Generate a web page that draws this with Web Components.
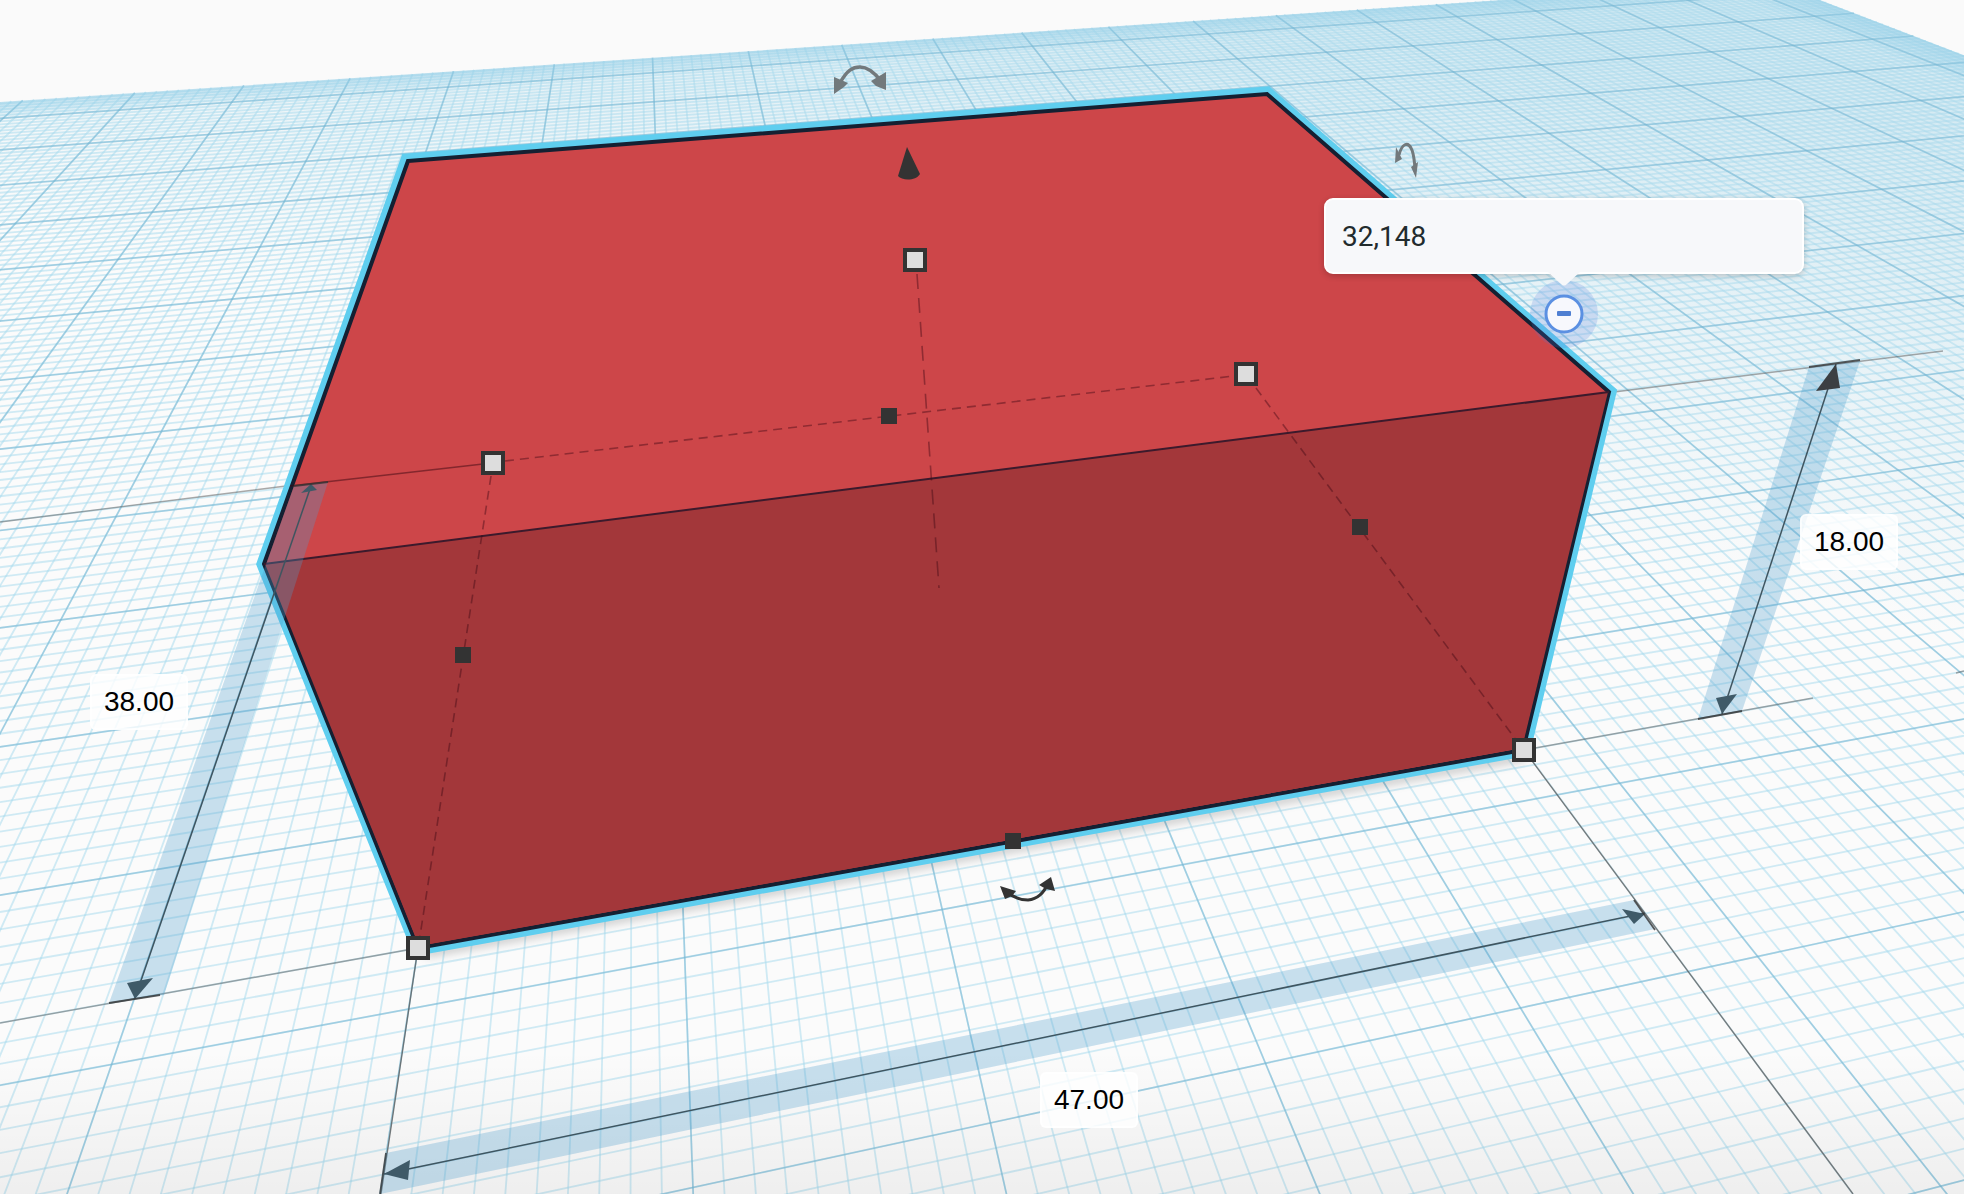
<!DOCTYPE html>
<html lang="en">
<head>
<meta charset="utf-8">
<title>Workplane</title>
<style>
    body {
        margin: 0;
        background: #fafafa;
        overflow: hidden;
    }
</style>
</head>
<body>
<scene-view>
    <work-plane></work-plane>
    <solid-box></solid-box>
    <rotate-handles></rotate-handles>

    <size-handle x="915" y="260" label="Height"></size-handle>
    <size-handle x="493" y="463" label="Back left corner"></size-handle>
    <size-handle x="1246" y="374" label="Back right corner"></size-handle>
    <size-handle x="418" y="948" label="Front left corner"></size-handle>
    <size-handle x="1524" y="750" label="Front right corner"></size-handle>
    <size-handle small x="889" y="416" label="Back edge"></size-handle>
    <size-handle small x="463" y="655" label="Left edge"></size-handle>
    <size-handle small x="1360" y="527" label="Right edge"></size-handle>
    <size-handle small x="1013" y="841" label="Front edge"></size-handle>

    <dimension-field x="139" y="702" value="38.00" label="Depth"></dimension-field>
    <dimension-field x="1849" y="542" value="18.00" label="Length"></dimension-field>
    <dimension-field x="1089" y="1100" value="47.00" label="Width"></dimension-field>

    <note-pin x="1564" y="314">32,148</note-pin>
</scene-view>

<script>
const SCENE_W = 1964;
const SCENE_H = 1194;

// puts an element on the free canvas, x and y are its centre in scene units
function placeOnScene(el) {
    el.style.left = (el.getAttribute('x') / SCENE_W * 100) + '%';
    el.style.top = (el.getAttribute('y') / SCENE_H * 100) + '%';
}

class SceneView extends HTMLElement {
    constructor() {
        super();
        this.attachShadow({mode: 'open'});
    }

    connectedCallback() {
        this.shadowRoot.innerHTML = `
            <style>
                :host {
                    display: block;
                    position: relative;
                    width: 100%;
                    aspect-ratio: 1964 / 1194;
                    overflow: hidden;
                    font-family: "Liberation Sans", Arial, sans-serif;
                }
            </style>
            <slot></slot>
        `;
    }
}

class WorkPlane extends HTMLElement {
    constructor() {
        super();
        this.attachShadow({mode: 'open'});
        this.left = -60;
        this.right = 145.2;
        this.near = -32;
        this.far = 122.6;
    }

    connectedCallback() {
        this.shadowRoot.innerHTML = `
            <style>
                :host {
                    display: block;
                    position: absolute;
                    inset: 0;
                }
                svg {
                    display: block;
                    width: 100%;
                    height: 100%;
                }
            </style>
            <svg viewBox="0 0 1964 1194" aria-hidden="true">
                <defs>
                    <linearGradient id="far" gradientUnits="userSpaceOnUse" x1="1300" y1="0" x2="1200" y2="480">
                        <stop offset="0" stop-color="#b0daeb" stop-opacity=".5"/>
                        <stop offset="1" stop-color="#b0daeb" stop-opacity="0"/>
                    </linearGradient>
                    <linearGradient id="rim" gradientUnits="userSpaceOnUse" x1="652" y1="57" x2="653.3" y2="76">
                        <stop offset="0" stop-color="#8fcce6" stop-opacity=".5"/>
                        <stop offset="1" stop-color="#8fcce6" stop-opacity="0"/>
                    </linearGradient>
                    <linearGradient id="side" gradientUnits="userSpaceOnUse" x1="1892" y1="28" x2="1882" y2="54">
                        <stop offset="0" stop-color="#8fcce6" stop-opacity=".5"/>
                        <stop offset="1" stop-color="#8fcce6" stop-opacity="0"/>
                    </linearGradient>
                    <linearGradient id="floor" x1="0" y1="0" x2="0" y2="1">
                        <stop offset=".88" stop-color="#000" stop-opacity="0"/>
                        <stop offset="1" stop-color="#000" stop-opacity=".05"/>
                    </linearGradient>
                </defs>
                <polygon points="${this.outline()}" fill="#fbfbfb"/>
                <path d="${this.columns(1, 0)}" stroke="#a4d9ee" stroke-opacity=".5" stroke-width="1.8" fill="none"/>
                <path d="${this.rows(1, -3)}" stroke="#a4d9ee" stroke-opacity=".5" stroke-width="1.8" fill="none"/>
                <polygon points="${this.outline()}" fill="url(#far)"/>
                <path d="${this.columns(10, 0)}" stroke="#6fb2d0" stroke-opacity=".5" stroke-width="1.6" fill="none"/>
                <path d="${this.rows(10, -3)}" stroke="#6fb2d0" stroke-opacity=".5" stroke-width="1.6" fill="none"/>
                <polygon points="${this.outline()}" fill="url(#rim)"/>
                <polygon points="${this.outline()}" fill="url(#side)"/>
                <rect width="1964" height="1194" fill="url(#floor)"/>
            </svg>
        `;
    }

    // plane millimetres to scene units, origin at the front left corner of the box
    project(u, v) {
        const w = 1 + 0.003479 * u + 0.013913 * v;
        const x = (28.845 * u + 8.824 * v + 418) / w;
        const y = (-1.604 * u - 6.311 * v + 948) / w;
        return x.toFixed(2) + ' ' + y.toFixed(2);
    }

    outline() {
        return [
            this.project(this.left, this.near),
            this.project(this.right, this.near),
            this.project(this.right, this.far),
            this.project(this.left, this.far)
        ].join(' ');
    }

    columns(step, offset) {
        let d = '';
        const start = Math.ceil((this.left - offset) / step) * step + offset;
        for (let u = start; u <= this.right; u += step) {
            d += 'M' + this.project(u, this.near) + 'L' + this.project(u, this.far);
        }
        return d;
    }

    rows(step, offset) {
        let d = '';
        const start = Math.ceil((this.near - offset) / step) * step + offset;
        for (let v = start; v <= this.far; v += step) {
            d += 'M' + this.project(this.left, v) + 'L' + this.project(this.right, v);
        }
        return d;
    }
}

class SolidBox extends HTMLElement {
    constructor() {
        super();
        this.attachShadow({mode: 'open'});
    }

    connectedCallback() {
        this.shadowRoot.innerHTML = `
            <style>
                :host {
                    display: block;
                    position: absolute;
                    inset: 0;
                }
                svg {
                    display: block;
                    width: 100%;
                    height: 100%;
                }
                .guide { stroke: #555; stroke-opacity: .5; stroke-width: 1.4; }
                .tick { stroke: #333; stroke-opacity: .8; stroke-width: 1.8; }
                .arrow { stroke: #3f5560; stroke-width: 1.5; }
                .head { fill: #3f5a68; }
                .band { fill: rgba(80, 160, 205, .3); }
                .dash { stroke: #3c0812; stroke-opacity: .42; stroke-width: 1.6; stroke-dasharray: 9 6; }
            </style>
            <svg viewBox="0 0 1964 1194" fill="none" aria-hidden="true">
                <defs>
                    <filter id="soft" x="-10%" y="-10%" width="120%" height="120%">
                        <feGaussianBlur stdDeviation="5"/>
                    </filter>
                </defs>

                <!-- guide lines on the plane -->
                <path class="guide" d="M0 1023L418 948M1524 750L1813 698M0 522L294 485M1614 392L1943 351M1956 673L1964 671"/>
                <path class="guide" d="M418 948L381 1194M1524 750L1853 1194" style="stroke-opacity:.75"/>

                <!-- shadow, selection outline, faces -->
                <path d="M425 953L1526 756" stroke="#000" stroke-opacity=".22" stroke-width="8" filter="url(#soft)"/>
                <polygon points="407,160 1267,93 1610,392 1524,750 418,949 263,564" stroke="#5fceef" stroke-width="13" stroke-linejoin="miter"/>
                <polygon points="408,161 1267,94 1609,392 1523,750 418,948 264,564" fill="#cd4649" stroke="#152032" stroke-width="4"/>
                <polygon points="265,564 1608,392 1522,748 419,946" fill="#a3373a"/>
                <path d="M264 564L1609 392" stroke="#3c1a2c" stroke-width="2"/>

                <!-- hidden edges -->
                <path d="M290 486L483 464" stroke="#3c0812" stroke-opacity=".5" stroke-width="1.6"/>
                <path class="dash" d="M505 461L1234 376M491 476L420 936M1256 388L1516 740"/>
                <path d="M917 274L939 588" stroke="#3c0812" stroke-opacity=".42" stroke-width="1.6" stroke-dasharray="15 9"/>

                <!-- depth -->
                <polygon class="band" points="109,1003 164,995 328,482 294,486"/>
                <path class="arrow" d="M135 998L311 486"/>
                <polygon class="head" points="127,983 153,978 135,999"/>
                <polygon class="head" points="301,493 317,490 311,484"/>
                <path class="tick" d="M109 1003L160 995M294 486L328 482"/>

                <!-- width -->
                <polygon class="band" points="386,1153 1634,900 1655,929 380,1194"/>
                <path class="arrow" d="M384 1174L1645 913"/>
                <polygon class="head" points="384,1174 410,1160 408,1180"/>
                <polygon class="head" points="1645,914 1622,909 1634,924"/>
                <path class="tick" d="M386 1153L380 1194M1634 900L1655 930"/>

                <!-- length -->
                <polygon class="band" points="1809,367 1860,361 1742,711 1698,719"/>
                <path class="arrow" d="M1836 364L1722 714"/>
                <polygon points="1836,364 1816,391 1840,388" fill="#3c3f42"/>
                <polygon class="head" points="1716,698 1737,694 1722,714"/>
                <path class="tick" d="M1809 367L1860 360M1698 719L1742 711"/>
            </svg>
        `;
    }
}

class RotateHandles extends HTMLElement {
    constructor() {
        super();
        this.attachShadow({mode: 'open'});
    }

    connectedCallback() {
        this.shadowRoot.innerHTML = `
            <style>
                :host {
                    display: block;
                    position: absolute;
                    inset: 0;
                }
                svg {
                    display: block;
                    width: 100%;
                    height: 100%;
                }
            </style>
            <svg viewBox="0 0 1964 1194" fill="none" aria-hidden="true">
                <g stroke="#72797c" stroke-width="3.5">
                    <path d="M840 83C847 70 853 67 860 67C868 67 874 72 881 81"/>
                    <path d="M834 77L848 83L844 87L834 94Z M886 72L871 81L876 86L886 90Z" fill="#72797c" stroke="none"/>
                </g>
                <g stroke="#72797c" stroke-width="3">
                    <path d="M1399 155C1402 143 1408 142 1411 148C1414 153 1414 159 1415 168"/>
                    <path d="M1396 147L1402 159L1395 163Z M1411 167L1418 162L1416 178Z" fill="#72797c" stroke="none"/>
                </g>
                <g stroke="#333" stroke-width="3.2">
                    <path d="M1007 892C1014 898 1021 900 1028 900C1038 899 1044 893 1048 883"/>
                    <path d="M1000 886L1016 891L1012 896L1005 899Z M1051 877L1039 885L1046 889L1055 891Z" fill="#333" stroke="none"/>
                </g>
                <path d="M907 147L898 176C902 181 916 181 920 174Z" fill="#333"/>
            </svg>
        `;
    }
}

class SizeHandle extends HTMLElement {
    constructor() {
        super();
        this.attachShadow({mode: 'open'});
    }

    connectedCallback() {
        this.shadowRoot.innerHTML = `
            <style>
                :host {
                    display: block;
                    position: absolute;
                    transform: translate(-50%, -50%);
                }
                button {
                    display: block;
                    box-sizing: border-box;
                    width: 24px;
                    height: 24px;
                    padding: 0;
                    border: 4px solid #333;
                    background: #ddd;
                }
                :host([small]) button {
                    width: 16px;
                    height: 16px;
                    background: #333;
                }
            </style>
            <button type="button" aria-label="${this.getAttribute('label')}"></button>
        `;
        placeOnScene(this);
    }
}

class DimensionField extends HTMLElement {
    constructor() {
        super();
        this.attachShadow({mode: 'open'});
    }

    connectedCallback() {
        this.shadowRoot.innerHTML = `
            <style>
                :host {
                    display: block;
                    position: absolute;
                    transform: translate(-50%, -50%);
                }
                input {
                    display: block;
                    box-sizing: border-box;
                    width: 98px;
                    height: 56px;
                    padding: 0;
                    border: 2px solid rgba(255, 255, 255, .6);
                    border-radius: 6px;
                    background: rgba(255, 255, 255, .8);
                    color: #000;
                    font: inherit;
                    font-size: 28px;
                    text-align: center;
                }
            </style>
            <input type="text" value="${this.getAttribute('value')}" aria-label="${this.getAttribute('label')}">
        `;
        placeOnScene(this);
    }
}

class NotePin extends HTMLElement {
    constructor() {
        super();
        this.attachShadow({mode: 'open'});
    }

    connectedCallback() {
        this.shadowRoot.innerHTML = `
            <style>
                :host {
                    display: block;
                    position: absolute;
                    width: 0;
                    height: 0;
                    font-family: Roboto, sans-serif;
                }
                button {
                    position: absolute;
                    left: -34px;
                    top: -34px;
                    width: 68px;
                    height: 68px;
                    padding: 0;
                    border: 0;
                    border-radius: 50%;
                    background: rgba(80, 120, 220, .2);
                }
                button svg {
                    display: block;
                }
                .bubble {
                    position: absolute;
                    left: -240px;
                    bottom: 40px;
                    box-sizing: border-box;
                    width: 480px;
                    height: 76px;
                    padding: 0 16px;
                    border: 2px solid #fff;
                    border-radius: 9px;
                    background: #f7f8fa;
                    box-shadow: 0 2px 6px rgba(0, 0, 0, .2);
                    color: #222b2d;
                    font-size: 28px;
                    line-height: 74px;
                }
                .tail {
                    position: absolute;
                    left: 222px;
                    top: 72px;
                }
            </style>
            <button type="button" aria-label="Hide value">
                <svg width="68" height="68" viewBox="0 0 68 68">
                    <circle cx="34" cy="34" r="18" fill="#f7f8fd" stroke="#5b90e2" stroke-width="3"/>
                    <rect x="27" y="31" width="14" height="5" rx="1" fill="#4f7fd2"/>
                </svg>
            </button>
            <div class="bubble">
                <slot></slot>
                <svg class="tail" width="32" height="14" viewBox="0 0 32 14">
                    <path d="M0 0H32L19 12Q16 15 13 12Z" fill="#f7f8fa"/>
                </svg>
            </div>
        `;
        placeOnScene(this);
    }
}

customElements.define('scene-view', SceneView);
customElements.define('work-plane', WorkPlane);
customElements.define('solid-box', SolidBox);
customElements.define('rotate-handles', RotateHandles);
customElements.define('size-handle', SizeHandle);
customElements.define('dimension-field', DimensionField);
customElements.define('note-pin', NotePin);
</script>
</body>
</html>
